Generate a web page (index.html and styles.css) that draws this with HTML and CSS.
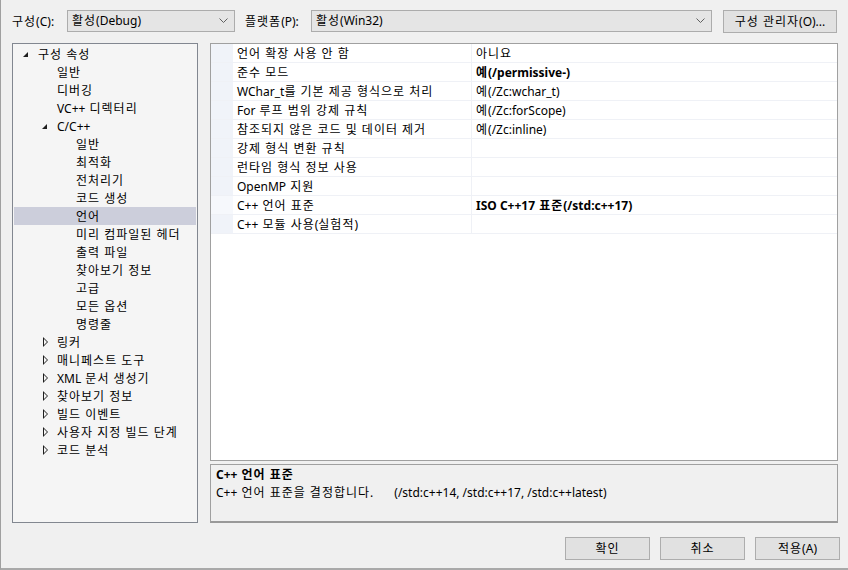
FILE: index.html
```html
<!DOCTYPE html>
<html lang="ko">
<head>
<meta charset="utf-8">
<title>속성 페이지</title>
<link rel="stylesheet" href="styles.css">
</head>
<body>
<div class="window">
  <div class="header">
    <span class="lbl lbl1">구성<span class="en">(C):</span></span>
    <div class="combo combo1"><span>활성<span class="en">(Debug)</span></span><svg class="chev" width="9" height="6" viewBox="0 0 9 6"><path d="M0.5 0.5 L4.5 4.5 L8.5 0.5" fill="none" stroke="#606060" stroke-width="1"/></svg></div>
    <span class="lbl lbl2">플랫폼<span class="en">(P):</span></span>
    <div class="combo combo2"><span>활성<span class="en">(Win32)</span></span><svg class="chev" width="9" height="6" viewBox="0 0 9 6"><path d="M0.5 0.5 L4.5 4.5 L8.5 0.5" fill="none" stroke="#606060" stroke-width="1"/></svg></div>
    <div class="btn btn-mgr">구성 관리자<span class="en">(O)...</span></div>
  </div>

  <div class="main">
    <div class="tree">
      <div class="node l0"><span class="exp"></span>구성 속성</div>
      <div class="node l1">일반</div>
      <div class="node l1">디버깅</div>
      <div class="node l1"><span class="en">VC++</span> 디렉터리</div>
      <div class="node l1"><span class="exp"></span><span class="en">C/C++</span></div>
      <div class="node l2">일반</div>
      <div class="node l2">최적화</div>
      <div class="node l2">전처리기</div>
      <div class="node l2">코드 생성</div>
      <div class="node l2 sel">언어</div>
      <div class="node l2">미리 컴파일된 헤더</div>
      <div class="node l2">출력 파일</div>
      <div class="node l2">찾아보기 정보</div>
      <div class="node l2">고급</div>
      <div class="node l2">모든 옵션</div>
      <div class="node l2">명령줄</div>
      <div class="node l1"><span class="col"></span>링커</div>
      <div class="node l1"><span class="col"></span>매니페스트 도구</div>
      <div class="node l1"><span class="col"></span><span class="en">XML</span> 문서 생성기</div>
      <div class="node l1"><span class="col"></span>찾아보기 정보</div>
      <div class="node l1"><span class="col"></span>빌드 이벤트</div>
      <div class="node l1"><span class="col"></span>사용자 지정 빌드 단계</div>
      <div class="node l1"><span class="col"></span>코드 분석</div>
    </div>

    <div class="right">
      <div class="grid">
        <div class="row"><div class="gut"></div><div class="name">언어 확장 사용 안 함</div><div class="val">아니요</div></div>
        <div class="row"><div class="gut"></div><div class="name">준수 모드</div><div class="val b">예<span class="en">(/permissive-)</span></div></div>
        <div class="row"><div class="gut"></div><div class="name"><span class="en">WChar_t</span>를 기본 제공 형식으로 처리</div><div class="val">예<span class="en">(/Zc:wchar_t)</span></div></div>
        <div class="row"><div class="gut"></div><div class="name"><span class="en">For</span> 루프 범위 강제 규칙</div><div class="val">예<span class="en">(/Zc:forScope)</span></div></div>
        <div class="row"><div class="gut"></div><div class="name">참조되지 않은 코드 및 데이터 제거</div><div class="val">예<span class="en">(/Zc:inline)</span></div></div>
        <div class="row"><div class="gut"></div><div class="name">강제 형식 변환 규칙</div><div class="val"></div></div>
        <div class="row"><div class="gut"></div><div class="name">런타임 형식 정보 사용</div><div class="val"></div></div>
        <div class="row"><div class="gut"></div><div class="name"><span class="en">OpenMP</span> 지원</div><div class="val"></div></div>
        <div class="row cur"><div class="gut"></div><div class="name"><span class="en">C++</span> 언어 표준</div><div class="val b"><span class="en">ISO C++17</span> 표준<span class="en">(/std:c++17)</span></div></div>
        <div class="row"><div class="gut"></div><div class="name"><span class="en">C++</span> 모듈 사용<span class="en">(</span>실험적<span class="en">)</span></div><div class="val"></div></div>
      </div>
      <div class="desc">
        <div class="desc-title"><span class="en">C++</span> 언어 표준</div>
        <div class="desc-text"><span><span class="en">C++</span> 언어 표준을 결정합니다.</span><span class="en opts">(/std:c++14, /std:c++17, /std:c++latest)</span></div>
      </div>
    </div>
  </div>

  <div class="footer">
    <div class="btn">확인</div>
    <div class="btn">취소</div>
    <div class="btn">적용<span class="en">(A)</span></div>
  </div>
</div>
</body>
</html>
```

FILE: styles.css
```css
* { box-sizing: border-box; }
html, body { margin: 0; padding: 0; }
body {
  font-family: "Noto Sans", "Noto Sans CJK KR", sans-serif;
  font-size: 12px;
  letter-spacing: 1px;
  color: #000;
  background: #f0f0f0;
}
.en { letter-spacing: 0; }
.window {
  width: 848px;
  height: 570px;
  background: #f0f0f0;
  border-left: 1px solid #a0a0a0;
  border-bottom: 2px solid #a9a9a9;
  display: flex;
  flex-direction: column;
}
.header {
  display: flex;
  align-items: center;
  margin-top: 10px;
  height: 23px;
  padding-left: 11px;
}
.lbl { line-height: 22px; white-space: nowrap; }
.lbl1 { width: 55px; }
.lbl2 { width: 66px; margin-left: 10px; }
.combo {
  height: 22px;
  align-self: flex-start;
  background: #e5e5e5;
  border: 1px solid #acacac;
  display: flex;
  align-items: center;
  justify-content: space-between;
  padding: 0 6px 0 4px;
  line-height: 20px;
}
.combo1 { width: 168px; }
.combo2 { width: 401px; }
.chev { display: block; }
.btn {
  height: 23px;
  background: #e1e1e1;
  border: 1px solid #adadad;
  display: flex;
  align-items: center;
  justify-content: center;
  line-height: 21px;
  white-space: nowrap;
}
.btn-mgr { width: 114px; margin-left: 11px; }

.main {
  display: flex;
  margin-top: 10px;
  padding-left: 11px;
}
.tree {
  width: 186px;
  height: 480px;
  background: #f5f5f5;
  border: 1px solid #828790;
  padding: 1px 1px 0 1px;
}
.node {
  height: 18px;
  line-height: 18px;
  padding-top: 1px;
  white-space: nowrap;
  position: relative;
}
.node.l0 { padding-left: 24px; }
.node.l1 { padding-left: 43px; }
.node.l2 { padding-left: 62px; }
.node.sel { background: #cccedb; }
.exp {
  position: absolute;
  top: 7px;
  width: 0;
  height: 0;
  border-left: 5px solid transparent;
  border-bottom: 5px solid #1e1e1e;
}
.l0 .exp { left: 9px; }
.l1 .exp { left: 28px; }
.col {
  position: absolute;
  left: 29px;
  top: 4px;
  width: 6px;
  height: 10px;
}
.col::before {
  content: "";
  position: absolute;
  left: 0; top: 0;
  border-top: 5px solid transparent;
  border-bottom: 5px solid transparent;
  border-left: 5px solid #1e1e1e;
}
.col::after {
  content: "";
  position: absolute;
  left: 1px; top: 2px;
  border-top: 3px solid transparent;
  border-bottom: 3px solid transparent;
  border-left: 3px solid #f5f5f5;
}

.right {
  margin-left: 12px;
  width: 628px;
  display: flex;
  flex-direction: column;
}
.grid {
  height: 418px;
  background: #fff;
  border: 1px solid #a0a0a0;
}
.row {
  display: flex;
  height: 19px;
  border-bottom: 1px solid #eff1f6;
}
.gut {
  width: 22px;
  background: #f0f3f9;
}
.row.cur .gut { background: #f6f8fc; }
.name {
  width: 239px;
  padding-left: 4px;
  padding-top: 1px;
  line-height: 18px;
  white-space: nowrap;
  border-right: 1px solid #eff1f6;
}
.val {
  flex: 1;
  padding-left: 4px;
  padding-top: 1px;
  line-height: 18px;
  white-space: nowrap;
}
.val.b { font-weight: bold; }

.desc {
  margin-top: 3px;
  height: 59px;
  background: #f0f0f0;
  border: 1px solid #a0a0a0;
  border-bottom: 2px solid #999;
  padding: 1px 5px;
}
.desc-title { font-weight: bold; line-height: 18px; }
.desc-text { line-height: 18px; white-space: nowrap; }
.opts { margin-left: 20px; }

.footer {
  display: flex;
  justify-content: flex-end;
  gap: 10px;
  margin-top: 14px;
  padding-right: 8px;
}
.footer .btn { width: 85px; }
```
